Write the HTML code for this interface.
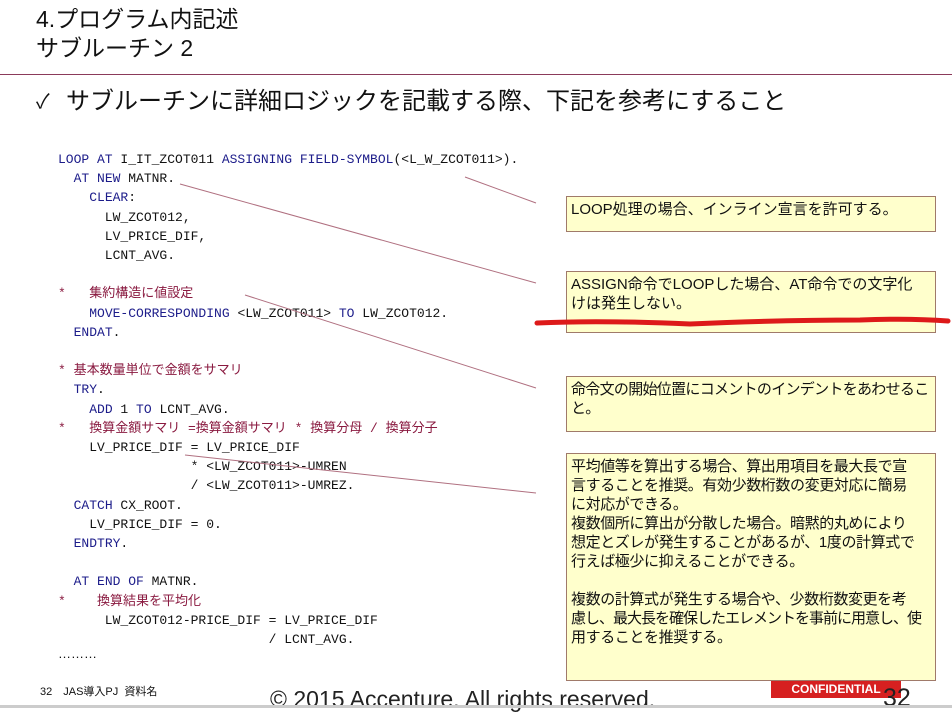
<!DOCTYPE html><html><head><meta charset="utf-8"><style>
body{margin:0;width:952px;height:708px;overflow:hidden;background:#fff;position:relative;font-family:"Liberation Sans","Noto Sans CJK JP",sans-serif;color:#111}
.a{position:absolute;white-space:pre}
.code{font-family:"Liberation Mono","Noto Sans CJK JP",monospace;font-size:13px;line-height:19.2px;color:#111}
.k{color:#1c1c8a}.c{color:#8a1a40}
.box{position:absolute;left:566px;width:370px;background:#ffffcc;border:1px solid #a07a6a;font-size:15px;line-height:19px;padding:3px 4px 3px 4px;box-sizing:border-box;color:#111;white-space:nowrap;overflow:hidden}
</style></head><body>
<div class="a" style="left:36px;top:5px;font-size:23px;line-height:29px">4.プログラム内記述<br>サブルーチン 2</div>
<div class="a" style="left:0;top:74px;width:952px;height:1px;background:#8b3a5a"></div>
<div class="a" style="left:36px;top:87px;font-size:20px;line-height:30px">✓</div>
<div class="a" style="left:66px;top:87px;font-size:24px;line-height:30px">サブルーチンに詳細ロジックを記載する際、下記を参考にすること</div>
<div class="a code" style="left:58px;top:150px"><span class="k">LOOP AT</span> I_IT_ZCOT011 <span class="k">ASSIGNING FIELD-SYMBOL</span>(&lt;L_W_ZCOT011&gt;).
  <span class="k">AT NEW</span> MATNR.
    <span class="k">CLEAR</span>:
      LW_ZCOT012,
      LV_PRICE_DIF,
      LCNT_AVG.

<span class="c">*   集約構造に値設定</span>
    <span class="k">MOVE-CORRESPONDING</span> &lt;LW_ZCOT011&gt; <span class="k">TO</span> LW_ZCOT012.
  <span class="k">ENDAT</span>.

<span class="c">* 基本数量単位で金額をサマリ</span>
  <span class="k">TRY</span>.
    <span class="k">ADD</span> 1 <span class="k">TO</span> LCNT_AVG.
<span class="c">*   換算金額サマリ =換算金額サマリ * 換算分母 / 換算分子</span>
    LV_PRICE_DIF = LV_PRICE_DIF
                 * &lt;LW_ZCOT011&gt;-UMREN
                 / &lt;LW_ZCOT011&gt;-UMREZ.
  <span class="k">CATCH</span> CX_ROOT.
    LV_PRICE_DIF = 0.
  <span class="k">ENDTRY</span>.

  <span class="k">AT END OF</span> MATNR.
<span class="c">*    換算結果を平均化</span>
      LW_ZCOT012-PRICE_DIF = LV_PRICE_DIF
                           / LCNT_AVG.
</div>
<div class="a" style="left:58px;top:646px;font-size:13px">………</div>
<svg class="a" style="left:0;top:0" width="952" height="708">
<g stroke="#b07080" stroke-width="1" fill="none">
<line x1="465" y1="177" x2="536" y2="203"/>
<line x1="180" y1="184" x2="536" y2="283"/>
<line x1="245" y1="295" x2="536" y2="388"/>
<line x1="185" y1="455" x2="536" y2="493"/>
</g>
</svg>
<div class="box" style="top:196px;height:36px">LOOP処理の場合、インライン宣言を許可する。</div>
<div class="box" style="top:271px;height:62px">ASSIGN命令でLOOPした場合、AT命令での文字化<br>けは発生しない。</div>
<div class="box" style="top:376px;height:56px;letter-spacing:-0.7px">命令文の開始位置にコメントのインデントをあわせるこ<br>と。</div>
<div class="box" style="top:453px;height:228px;letter-spacing:-0.4px">平均値等を算出する場合、算出用項目を最大長で宣<br>言することを推奨。有効少数桁数の変更対応に簡易<br>に対応ができる。<br>複数個所に算出が分散した場合。暗黙的丸めにより<br>想定とズレが発生することがあるが、1度の計算式で<br>行えば極少に抑えることができる。<br><br>複数の計算式が発生する場合や、少数桁数変更を考<br><span style="letter-spacing:-1px">慮し、最大長を確保したエレメントを事前に用意し、使</span><br>用することを推奨する。</div>
<svg class="a" style="left:0;top:0" width="952" height="708">
<path d="M537 323 Q600 320 690 324 Q780 320 860 320 Q910 318 948 321" stroke="#dd1a1a" stroke-width="5" fill="none" stroke-linecap="round"/>
</svg>
<div class="a" style="left:40px;top:683px;font-size:11px">32　JAS導入PJ  資料名</div>
<div class="a" style="left:270px;top:686px;font-size:23px;color:#222">© 2015 Accenture. All rights reserved.</div>
<div class="a" style="left:771px;top:681px;width:130px;height:17px;background:#d62020;color:#fff;font-size:12px;font-weight:bold;line-height:17px;text-align:center">CONFIDENTIAL</div>
<div class="a" style="left:883px;top:684px;font-size:25px;color:#222">32</div>
<div class="a" style="left:0;top:705px;width:952px;height:3px;background:#ccc"></div>
</body></html>
